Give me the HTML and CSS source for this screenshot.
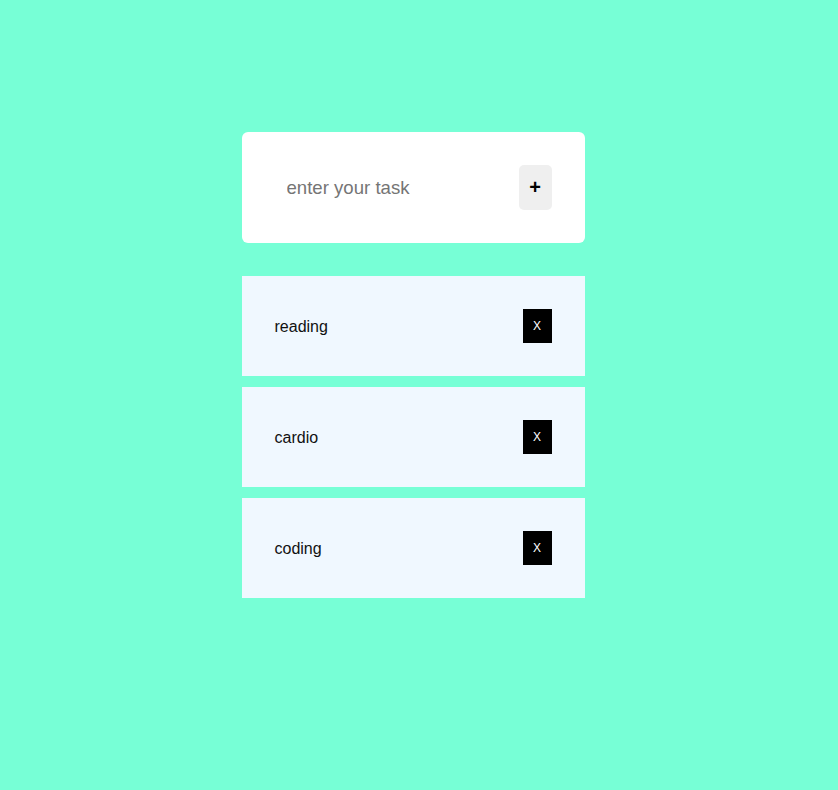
FILE: index.html
```html
<!DOCTYPE html>
<html>
<head>
<meta charset="utf-8">
<link rel="stylesheet" href="styles.css">
</head>
<body>
<div class="app">
  <form class="card">
    <input class="task-input" type="text" placeholder="enter your task">
    <button class="add-btn" type="button">+</button>
  </form>
  <ul class="list">
    <li class="item"><span class="item-text">reading</span><button class="del-btn" type="button">X</button></li>
    <li class="item"><span class="item-text">cardio</span><button class="del-btn" type="button">X</button></li>
    <li class="item"><span class="item-text">coding</span><button class="del-btn" type="button">X</button></li>
  </ul>
</div>
</body>
</html>
```
FILE: styles.css
```css
html, body {
  margin: 0;
  padding: 0;
}
body {
  background: #77ffd6;
  font-family: "Liberation Sans", Arial, sans-serif;
  min-height: 790px;
}
.app {
  width: 343px;
  margin: 0 auto;
  padding-top: 132px;
  position: relative;
  left: -6px;
}
.card {
  margin: 0;
  height: 111px;
  box-sizing: border-box;
  background: #fff;
  border-radius: 6px;
  display: flex;
  align-items: center;
  padding: 0 33px 0 45px;
}
.task-input {
  flex: 1;
  border: none;
  outline: none;
  background: transparent;
  font-family: "Liberation Sans", Arial, sans-serif;
  font-size: 18.6px;
  padding: 0;
  color: #333;
  min-width: 0;
}
.task-input::placeholder {
  color: #757575;
}
.add-btn {
  width: 33px;
  height: 45px;
  border: none;
  border-radius: 5px;
  background: #efefef;
  font-family: "Liberation Sans", Arial, sans-serif;
  font-size: 20px;
  font-weight: bold;
  color: #000;
  padding: 0;
}
.list {
  list-style: none;
  margin: 33px 0 0;
  padding: 0;
  display: flex;
  flex-direction: column;
  gap: 11px;
}
.item {
  height: 100px;
  box-sizing: border-box;
  background: #f0f8ff;
  display: flex;
  align-items: center;
  justify-content: space-between;
  padding: 0 33px;
}
.item-text {
  font-size: 16px;
  color: #111;
  padding-top: 2px;
}
.del-btn {
  width: 29px;
  height: 34px;
  border: none;
  background: #000;
  color: #fff;
  font-family: "Liberation Sans", Arial, sans-serif;
  font-size: 12px;
  padding: 0;
}
```
